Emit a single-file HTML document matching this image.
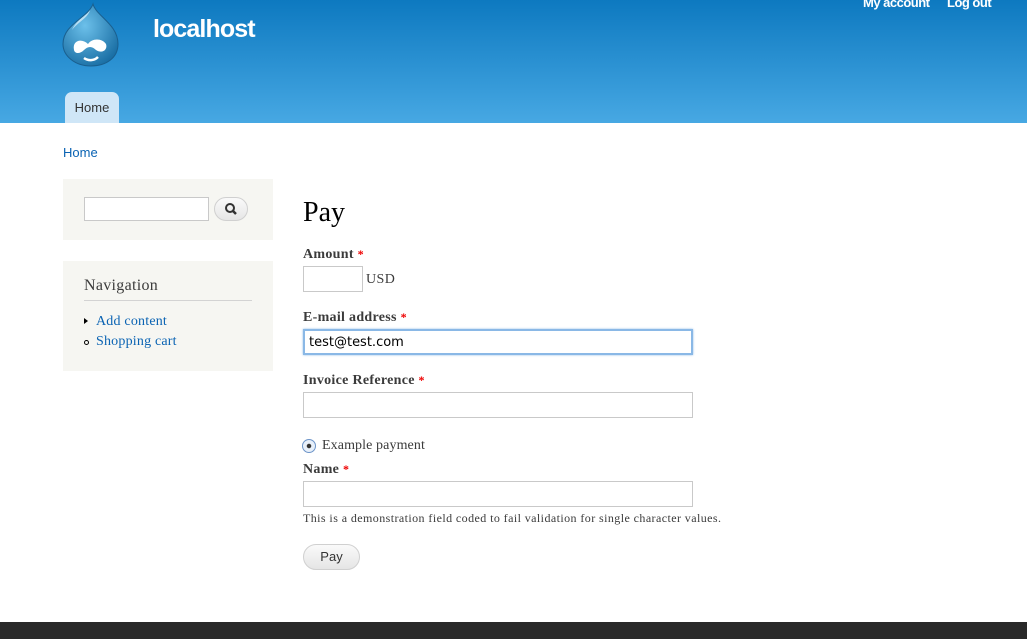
<!DOCTYPE html>
<html><head><meta charset="utf-8"><style>
*{margin:0;padding:0;box-sizing:border-box}
body{width:1027px;height:639px;overflow:hidden;background:#fff;position:relative;font-family:"Liberation Serif",serif;color:#3b3b3b}
.a{position:absolute}
#hdr{left:0;top:0;width:1027px;height:123px;background:linear-gradient(#0d79c0,#47a8e3)}
.sans{font-family:"Liberation Sans",sans-serif}
.inp{position:absolute;border:1px solid #c9c9c9;background:#fff}
.lbl{position:absolute;font-weight:bold;font-size:14px;color:#3b3b3b;letter-spacing:0.3px}
.lbl b{color:#e00;font-size:12px}
a{color:#0a63b3;text-decoration:none}
</style></head><body>
<div id="hdr" class="a"></div>
<svg class="a" style="left:60px;top:2px" width="62" height="66" viewBox="0 0 62 66">
<defs><radialGradient id="g" cx="0.4" cy="0.35" r="0.7"><stop offset="0" stop-color="#6cc0ea"/><stop offset="1" stop-color="#1a6fa5"/></radialGradient></defs>
<path d="M33 2 C36 14 58 22 58 42 C58 56 46 64 31 64 C15 64 3 54 3 42 C3 22 28 16 33 2Z" fill="url(#g)" stroke="#1a5f8e" stroke-width="1"/>
<path d="M12 28 C16 18 26 14 30 8 C28 16 18 20 12 28Z" fill="#cfeaf8" opacity=".8"/>
<path d="M14 48 C12 38 22 36 28 42 C32 36 42 36 46 42 C48 48 42 52 36 48 C32 44 28 44 24 48 C20 52 15 52 14 48Z" fill="#fff"/>
<path d="M24 56 C28 59 34 59 38 55" stroke="#fff" stroke-width="2.5" fill="none"/>
</svg>
<div class="a sans" style="left:153px;top:15px;font-size:25px;font-weight:bold;color:#fff;letter-spacing:-0.9px">localhost</div>
<div class="a sans" style="left:863px;top:-5px;font-size:13px;color:#fff;font-weight:bold;letter-spacing:-0.5px">My account</div>
<div class="a sans" style="left:947px;top:-5px;font-size:13px;color:#fff;font-weight:bold;letter-spacing:-0.5px">Log out</div>
<div class="a sans" style="left:65px;top:92px;width:54px;height:31px;background:#cfe6f7;border-radius:7px 7px 0 0;font-size:13px;color:#333;text-align:center;line-height:31px">Home</div>
<div class="a sans" style="left:63px;top:145px;font-size:13px"><a>Home</a></div>

<div class="a" style="left:63px;top:179px;width:210px;height:61px;background:#f6f6f2"></div>
<div class="inp" style="left:84px;top:197px;width:125px;height:24px"></div>
<div class="a" style="left:214px;top:197px;width:34px;height:24px;border:1px solid #d0d0d0;border-radius:12px;background:linear-gradient(#fafafa,#e6e6e6)">
<svg width="32" height="22"><circle cx="15" cy="10" r="4" stroke="#333" stroke-width="2" fill="none"/><path d="M18 13l3 3" stroke="#333" stroke-width="2.5"/></svg></div>

<div class="a" style="left:63px;top:261px;width:210px;height:110px;background:#f6f6f2"></div>
<div class="a" style="left:84px;top:277px;font-size:16px;color:#3b3b3b;letter-spacing:0.3px">Navigation</div>
<div class="a" style="left:84px;top:300px;width:168px;height:1px;background:#d3d3d3"></div>
<div class="a" style="left:84px;top:318px;width:0;height:0;border-left:4px solid #000;border-top:3.5px solid transparent;border-bottom:3.5px solid transparent"></div>
<div class="a" style="left:96px;top:314px;font-size:14px;letter-spacing:0.2px"><a>Add content</a></div>
<div class="a" style="left:84px;top:340px;width:5px;height:5px;border:1px solid #000;border-radius:50%"></div>
<div class="a" style="left:96px;top:334px;font-size:14px;letter-spacing:0.2px"><a>Shopping cart</a></div>

<div class="a" style="left:303px;top:197px;font-size:28px;color:#000">Pay</div>
<div class="lbl" style="left:303px;top:247px">Amount <b>*</b></div>
<div class="inp" style="left:303px;top:266px;width:60px;height:26px"></div>
<div class="a" style="left:366px;top:272px;font-size:14px;letter-spacing:0.4px">USD</div>
<div class="lbl" style="left:303px;top:310px">E-mail address <b>*</b></div>
<div class="a" style="left:303px;top:329px;width:390px;height:26px;border:2px solid #8ab8e6;background:#fff;box-shadow:0 0 2px #8ab8e6"></div>
<div class="a" style="left:309px;top:335px;font-family:'DejaVu Sans',sans-serif;font-size:13px;color:#000">test@test.com</div>
<div class="lbl" style="left:303px;top:373px">Invoice Reference <b>*</b></div>
<div class="inp" style="left:303px;top:392px;width:390px;height:26px"></div>
<div class="a" style="left:302px;top:439px;width:14px;height:14px;border:1px solid #6c94c8;border-radius:50%;background:radial-gradient(#333 0 2px,#e8f0fa 2.5px)"></div>
<div class="a" style="left:322px;top:438px;font-size:14px;letter-spacing:0.1px">Example payment</div>
<div class="lbl" style="left:303px;top:462px">Name <b>*</b></div>
<div class="inp" style="left:303px;top:481px;width:390px;height:26px"></div>
<div class="a" style="left:303px;top:511px;font-size:12px;letter-spacing:0.42px">This is a demonstration field coded to fail validation for single character values.</div>
<div class="a sans" style="left:303px;top:544px;width:57px;height:26px;border:1px solid #d0d0d0;border-radius:13px;background:linear-gradient(#fafafa,#e5e5e5);font-size:13px;color:#333;text-align:center;line-height:24px">Pay</div>

<div class="a" style="left:0;top:622px;width:1027px;height:17px;background:#292929"></div>
</body></html>
